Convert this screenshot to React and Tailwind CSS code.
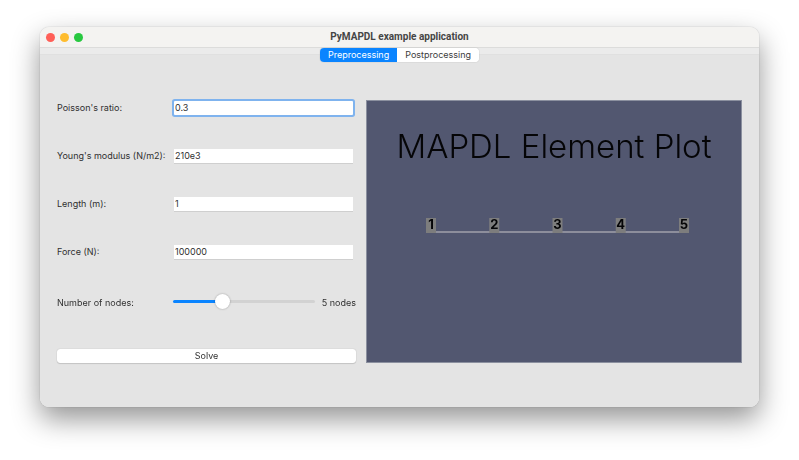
import { useState } from "react";

const fields = [
  { id: "poisson", label: "Poisson's ratio:", value: "0.3" },
  { id: "young", label: "Young's modulus (N/m2):", value: "210e3" },
  { id: "length", label: "Length (m):", value: "1" },
  { id: "force", label: "Force (N):", value: "100000" },
];

const MIN_NODES = 1;
const MAX_NODES = 13;

function TitleBar() {
  return (
    <header className="grid h-[21px] grid-cols-[1fr_auto_1fr] items-center border-b border-[#dcdcdb] bg-[#f4f3f1] px-[6px]">
      <div className="flex gap-[5px]">
        <span className="h-[9px] w-[9px] rounded-full bg-[#ff5f57]" />
        <span className="h-[9px] w-[9px] rounded-full bg-[#febc2e]" />
        <span className="h-[9px] w-[9px] rounded-full bg-[#28c840]" />
      </div>
      <h1 className="font-['Roboto',sans-serif] text-[10px] leading-[14px] font-bold text-[#454545]">
        PyMAPDL example application
      </h1>
    </header>
  );
}

function Tabs({ active, onChange }) {
  return (
    <div role="tablist" className="relative flex justify-center">
      <div className="flex overflow-hidden rounded-[4px] bg-white shadow-[0_0_1px_rgba(0,0,0,0.35)]">
        {["Preprocessing", "Postprocessing"].map((name) => (
          <button
            key={name}
            type="button"
            role="tab"
            aria-selected={active === name}
            onClick={() => onChange(name)}
            className={
              active === name
                ? "h-[14px] bg-[#0a84ff] px-[8px] leading-[14px] text-white"
                : "h-[14px] bg-white px-[8px] leading-[14px] text-[#3c3c3c]"
            }
          >
            {name}
          </button>
        ))}
      </div>
    </div>
  );
}

function ElementPlot({ nodes }) {
  const left = 65;
  const right = 318;
  const step = (right - left) / Math.max(nodes - 1, 1);

  return (
    <svg
      viewBox="0 0 376 263"
      className="block w-full bg-[#525770]"
      role="img"
      aria-label="MAPDL Element Plot"
    >
      <rect x="0.5" y="0.5" width="375" height="262" fill="none" stroke="#8b909f" />
      <text
        x="188"
        y="58"
        textAnchor="middle"
        fill="#050507"
        className="font-['Inter'] text-[33px] font-light"
      >
        MAPDL Element Plot
      </text>
      <line x1={left} y1="132" x2={right} y2="132" stroke="#8d8e9c" strokeWidth="2" />
      {Array.from({ length: nodes }, (_, i) => (
        <g key={i}>
          <rect x={left + i * step - 5} y="118" width="10" height="15" fill="#7d7d7d" />
          <text
            x={left + i * step}
            y="129"
            textAnchor="middle"
            fill="#050507"
            className="font-['Inter'] text-[13px] font-bold"
          >
            {i + 1}
          </text>
        </g>
      ))}
    </svg>
  );
}

export default function App() {
  const [tab, setTab] = useState("Preprocessing");
  const [nodes, setNodes] = useState(5);
  const percent = ((nodes - MIN_NODES) / (MAX_NODES - MIN_NODES)) * 100;

  return (
    <div className="min-h-screen bg-white px-[40px] pt-[27px] pb-[53px] font-['Inter',sans-serif] text-[9px] leading-[14px] text-[#303030]">
      <div className="rounded-[9px] shadow-[0_0_1px_rgba(0,0,0,0.4),0_12px_28px_rgba(0,0,0,0.42)]">
        <div className="overflow-hidden rounded-[9px] bg-[#ebebeb]">
          <TitleBar />
          <Tabs active={tab} onChange={setTab} />
          <main className="-mt-[8px] grid grid-cols-[299fr_376fr] items-start gap-[10px] border-t border-[#e0e0e0] bg-[#e4e4e4] px-[17px] pt-[29px] pb-[25px]">
            <form onSubmit={(e) => e.preventDefault()}>
              {fields.map((field, i) => (
                <div key={field.id} className="flex h-[48px] items-center">
                  <label htmlFor={field.id} className="w-[117px] shrink-0">
                    {field.label}
                  </label>
                  <input
                    id={field.id}
                    type="text"
                    defaultValue={field.value}
                    autoFocus={i === 0}
                    className="mr-[3px] h-[14px] min-w-0 flex-1 bg-white px-px caret-transparent shadow-[0_1px_0_#cfcfcf] outline-none focus:rounded-[1px] focus:shadow-[0_0_0_2px_#7fb3ee]"
                  />
                </div>
              ))}
              <div className="flex h-[54px] items-center">
                <label htmlFor="nodes" className="w-[116px] shrink-0">
                  Number of nodes:
                </label>
                <input
                  id="nodes"
                  type="range"
                  min={MIN_NODES}
                  max={MAX_NODES}
                  value={nodes}
                  onChange={(e) => setNodes(Number(e.target.value))}
                  style={{
                    backgroundImage: `linear-gradient(to right, #0a84ff ${percent}%, #d2d2d2 ${percent}%)`,
                  }}
                  className="mb-[4px] h-[3px] min-w-0 flex-1 appearance-none rounded-full outline-none [&::-webkit-slider-thumb]:h-[15px] [&::-webkit-slider-thumb]:w-[15px] [&::-webkit-slider-thumb]:appearance-none [&::-webkit-slider-thumb]:rounded-full [&::-webkit-slider-thumb]:bg-white [&::-webkit-slider-thumb]:shadow-[0_0_2px_rgba(0,0,0,0.35)]"
                />
                <output htmlFor="nodes" className="ml-[7px] whitespace-nowrap">
                  {nodes} nodes
                </output>
              </div>
              <div className="flex h-[52px] items-center">
                <button
                  type="submit"
                  className="h-[14px] w-full rounded-[3px] bg-white text-center shadow-[0_0_1px_rgba(0,0,0,0.3),0_1px_1px_rgba(0,0,0,0.12)]"
                >
                  Solve
                </button>
              </div>
            </form>
            <div className="pt-[16px]">
              <ElementPlot nodes={nodes} />
            </div>
          </main>
        </div>
      </div>
    </div>
  );
}
